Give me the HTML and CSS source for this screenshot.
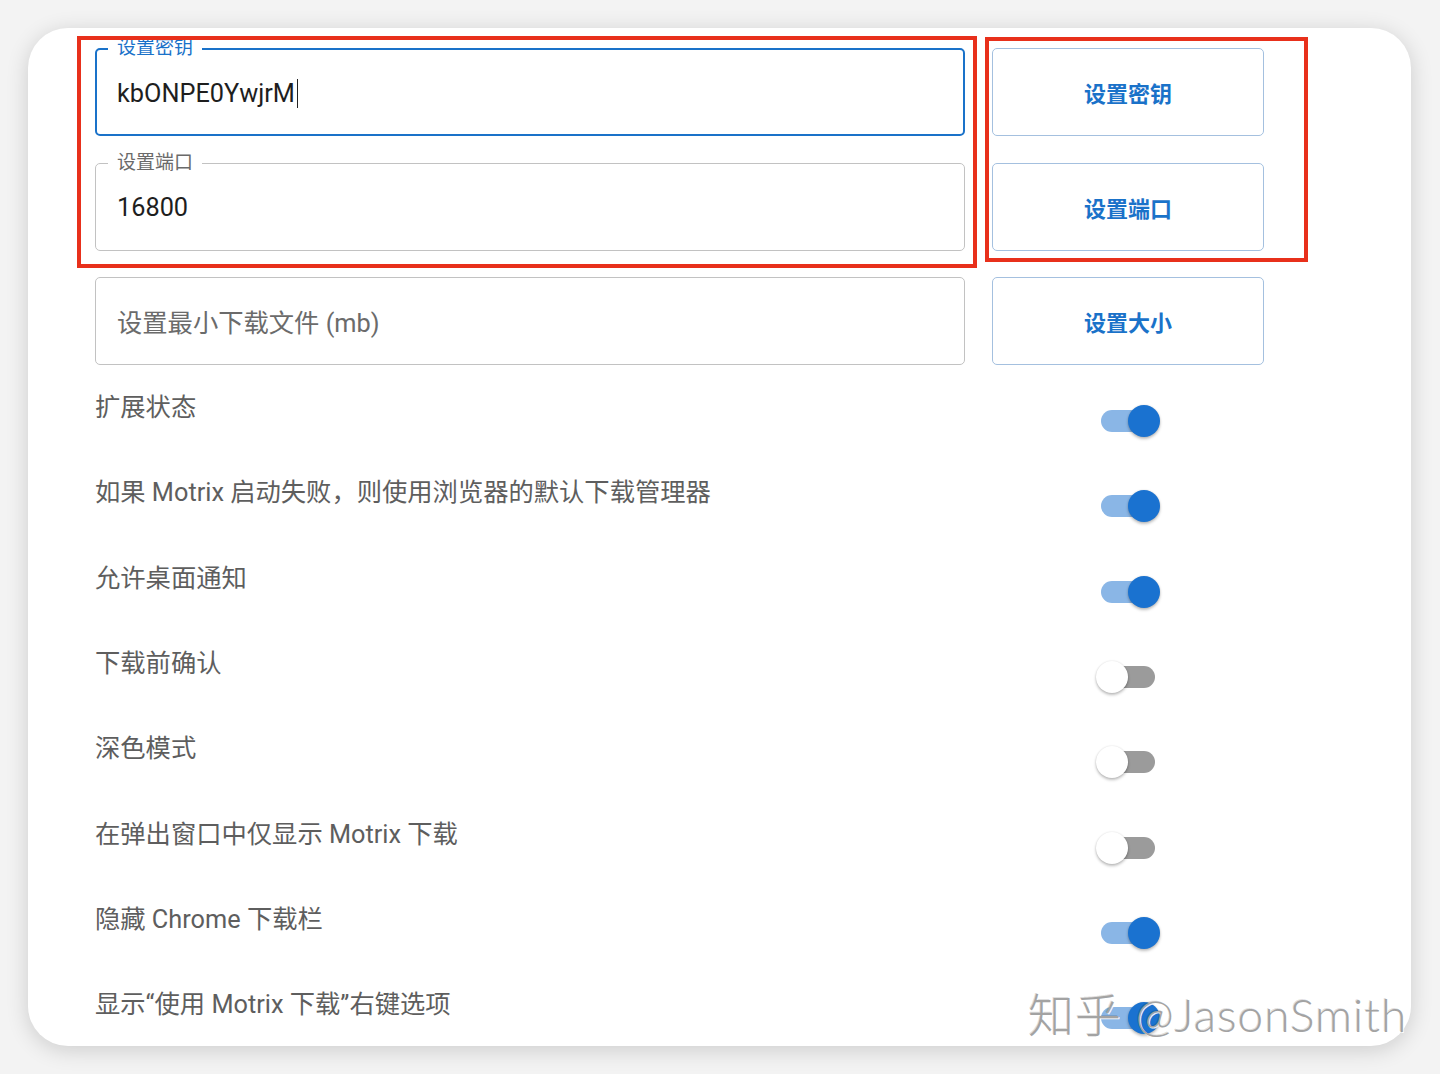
FILE: index.html
```html
<!DOCTYPE html>
<html lang="zh-CN">
<head>
    <meta charset="UTF-8">
    <meta name="viewport" content="width=device-width, initial-scale=1.0">
    <title>Motrix 扩展设置</title>
    <link rel="stylesheet" href="styles.css">
</head>
<body>
    <div class="card">
        <!-- field rows -->
        <div class="fields">
            <div class="field-row">
                <div class="field focused">
                    <span class="field-label">设置密钥</span>
                    <span class="field-value">kbONPE0YwjrM<span class="caret"></span></span>
                </div>
                <div class="btn">设置密钥</div>
            </div>
            <div class="field-row">
                <div class="field">
                    <span class="field-label">设置端口</span>
                    <span class="field-value">16800</span>
                </div>
                <div class="btn">设置端口</div>
            </div>
            <div class="field-row">
                <div class="field">
                    <span class="placeholder">设置最小下载文件 (mb)</span>
                </div>
                <div class="btn">设置大小</div>
            </div>
        </div>

        <!-- switches -->
        <div class="switch-list">
            <div class="switch-row">
                <div class="switch-label">扩展状态</div>
                <div class="switch on"><span class="track"></span><span class="thumb"></span></div>
            </div>
            <div class="switch-row">
                <div class="switch-label">如果 Motrix 启动失败，则使用浏览器的默认下载管理器</div>
                <div class="switch on"><span class="track"></span><span class="thumb"></span></div>
            </div>
            <div class="switch-row">
                <div class="switch-label">允许桌面通知</div>
                <div class="switch on"><span class="track"></span><span class="thumb"></span></div>
            </div>
            <div class="switch-row">
                <div class="switch-label">下载前确认</div>
                <div class="switch"><span class="track"></span><span class="thumb"></span></div>
            </div>
            <div class="switch-row">
                <div class="switch-label">深色模式</div>
                <div class="switch"><span class="track"></span><span class="thumb"></span></div>
            </div>
            <div class="switch-row">
                <div class="switch-label">在弹出窗口中仅显示 Motrix 下载</div>
                <div class="switch"><span class="track"></span><span class="thumb"></span></div>
            </div>
            <div class="switch-row">
                <div class="switch-label">隐藏 Chrome 下载栏</div>
                <div class="switch on"><span class="track"></span><span class="thumb"></span></div>
            </div>
            <div class="switch-row">
                <div class="switch-label">显示“使用 Motrix 下载”右键选项</div>
                <div class="switch on"><span class="track"></span><span class="thumb"></span></div>
            </div>
        </div>

        <!-- red annotation frames -->
        <div class="mark mark-fields"></div>
        <div class="mark mark-buttons"></div>
    </div>

    <div class="watermark">知乎 @JasonSmith</div>
</body>
</html>
```

FILE: styles.css
```css
body {
    margin: 0;
    padding: 0;
    background-color: #f3f3f3;
    font-family: Roboto, "Noto Sans CJK SC", sans-serif;
    position: relative;
    height: 1074px;
    overflow: hidden;
}
.card {
    position: relative;
    margin: 28px 0 0 28px;
    width: 1383px;
    height: 1018px;
    box-sizing: border-box;
    padding: 20px 0 0 67px;
    background-color: #fff;
    border-radius: 40px;
    box-shadow: 0 4px 22px rgba(0, 0, 0, 0.16);
    overflow: hidden;
}
.fields {
    display: flex;
    flex-direction: column;
    gap: 26.5px;
}
.field-row {
    display: grid;
    grid-template-columns: 870px 272px;
    column-gap: 27px;
    height: 88px;
}
.field {
    position: relative;
    display: flex;
    align-items: center;
    padding: 0 21px;
    border: 1px solid #c2c2c2;
    border-radius: 5px;
    font-size: 25.3px;
}
.field.focused {
    padding: 0 20px;
    border: 2px solid #1a72c9;
}
.field-label {
    position: absolute;
    top: -12px;
    left: 12px;
    padding: 0 9px;
    background-color: #fff;
    font-size: 19px;
    line-height: 22px;
    color: #6a6a6a;
}
.field.focused .field-label {
    top: -13px;
    left: 11px;
    color: #1a72c9;
}
.field-value {
    color: #1e1e1e;
    display: flex;
    align-items: center;
    padding-top: 2px;
}
.caret {
    display: inline-block;
    width: 1px;
    height: 29px;
    margin-left: 2px;
    background-color: #222;
}
.placeholder {
    color: #6b6b6b;
}
.btn {
    display: flex;
    align-items: center;
    justify-content: center;
    border: 1px solid #a4c0df;
    border-radius: 5px;
    color: #1a72c9;
    font-size: 22px;
    font-weight: bold;
}
.switch-list {
    padding-top: 15px;
}
.switch-row {
    display: grid;
    grid-template-columns: 870px 272px;
    column-gap: 27px;
    height: 85.33px;
    align-items: start;
}
.switch-label {
    padding-top: 13px;
    line-height: 30px;
    font-size: 25.3px;
    color: #5e5e5e;
}
.switch {
    position: relative;
    justify-self: center;
    width: 64px;
    height: 38px;
    margin-top: 22px;
}
.switch .track {
    position: absolute;
    left: 5px;
    top: 8px;
    width: 54px;
    height: 22px;
    border-radius: 11px;
    background-color: #9b9b9b;
}
.switch .thumb {
    position: absolute;
    left: 0;
    top: 3px;
    width: 32px;
    height: 32px;
    border-radius: 50%;
    background-color: #fff;
    box-shadow: 0 2px 3px rgba(0, 0, 0, 0.25), 0 0 2px rgba(0, 0, 0, 0.12);
}
.switch.on .track {
    background-color: #8ab6e6;
}
.switch.on .thumb {
    left: 32px;
    background-color: #1a72d0;
}
.mark {
    position: absolute;
    border: 4px solid #e8301b;
    box-sizing: border-box;
}
.mark-fields {
    left: 49px;
    top: 8px;
    width: 900px;
    height: 232px;
}
.mark-buttons {
    left: 957px;
    top: 9px;
    width: 323px;
    height: 225px;
}
.watermark {
    position: absolute;
    left: 1028px;
    top: 985px;
    font-family: Lato, "Noto Sans CJK SC", sans-serif;
    font-weight: 300;
    font-size: 46px;
    line-height: 60px;
    letter-spacing: 1px;
    color: #a3a3a3;
    text-shadow: 1px 1px 0 rgba(255, 255, 255, 0.9), -1px -1px 0 rgba(0, 0, 0, 0.12);
    white-space: nowrap;
}
```
